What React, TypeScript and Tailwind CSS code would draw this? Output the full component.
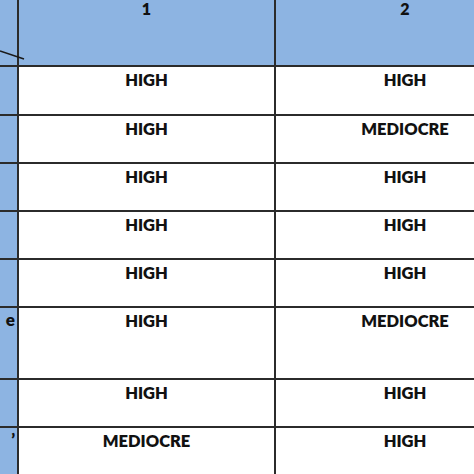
const rows: { label: string; a: string; b: string; h: string }[] = [
  { label: "", a: "HIGH", b: "HIGH", h: "h-[49px]" },
  { label: "", a: "HIGH", b: "MEDIOCRE", h: "h-[48px]" },
  { label: "", a: "HIGH", b: "HIGH", h: "h-[48px]" },
  { label: "", a: "HIGH", b: "HIGH", h: "h-[48px]" },
  { label: "", a: "HIGH", b: "HIGH", h: "h-[48px]" },
  { label: "e", a: "HIGH", b: "MEDIOCRE", h: "h-[72px]" },
  { label: "", a: "HIGH", b: "HIGH", h: "h-[48px]" },
  { label: "’", a: "MEDIOCRE", b: "HIGH", h: "h-[60px]" },
];

export default function App() {
  return (
    <div
      className="w-[474px] h-[474px] overflow-hidden bg-white text-[#111]"
      style={{ fontFamily: "Lato, 'Open Sans', sans-serif" }}
    >
      <div className="w-[534px] flex flex-col">
        {/* header */}
        <div className="relative flex h-[67px] bg-[#8db4e2] border-b-2 border-[#2b2b2b]">
          <div className="w-[19px] shrink-0 border-r-2 border-[#2b2b2b]" />
          <div className="w-[257px] shrink-0 border-r-2 border-[#2b2b2b] text-center text-[16px] font-extrabold leading-[16px] pt-[1px]">
            1
          </div>
          <div className="flex-1 text-center text-[16px] font-extrabold leading-[16px] pt-[1px]">2</div>
          <svg className="absolute left-0 top-0" width="30" height="66">
            <line x1="0" y1="51" x2="24" y2="59" stroke="#1a1a1a" strokeWidth="1.6" />
          </svg>
        </div>

        {rows.map((r, i) => (
          <div key={i} className={`flex ${r.h} border-b-2 border-[#2b2b2b]`}>
            <div className="w-[19px] shrink-0 bg-[#8db4e2] border-r-2 border-[#2b2b2b] flex justify-end overflow-hidden">
              <span className="text-[17px] font-extrabold leading-[20px] pt-[2px] pr-[2px]">{r.label}</span>
            </div>
            <div className="w-[257px] shrink-0 border-r-2 border-[#2b2b2b] text-center text-[16.5px] font-extrabold leading-[20px] pt-[3px]">
              {r.a}
            </div>
            <div className="flex-1 text-center text-[16.5px] font-extrabold leading-[20px] pt-[3px]">{r.b}</div>
          </div>
        ))}
      </div>
    </div>
  );
}
